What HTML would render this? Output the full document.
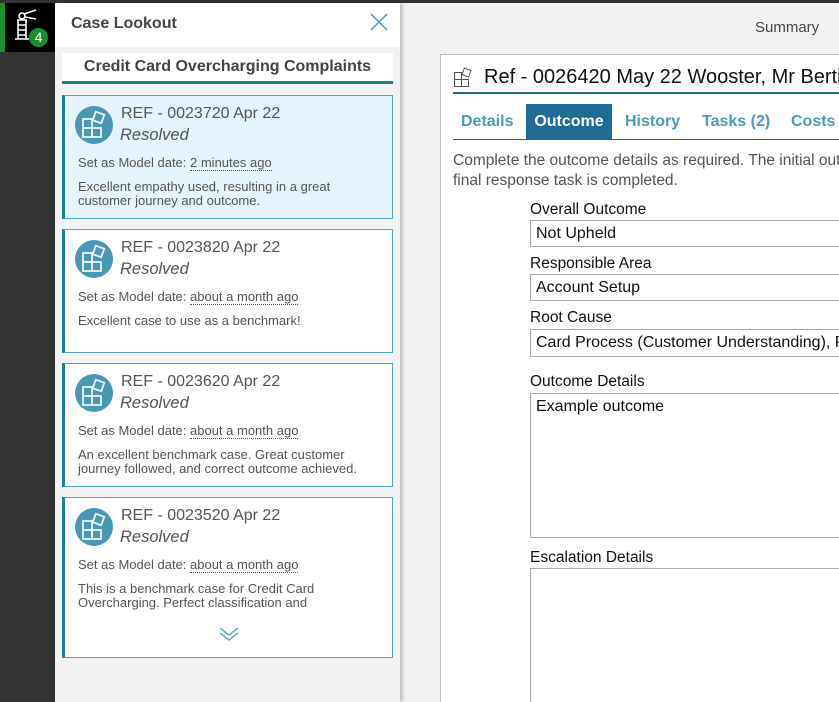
<!DOCTYPE html>
<html><head><style>
*{box-sizing:border-box;margin:0;padding:0}
html,body{width:839px;height:702px;overflow:hidden}
body{background:#f2f2f2;font-family:"Liberation Sans",Arial,sans-serif;position:relative}
.abs{position:absolute}
.card{position:absolute;left:62px;width:331px;background:#fff;border:1px solid #4aa3d0;border-left:3px solid #1e7f8e}
.ic{position:absolute;left:10px;top:10px;width:38px;height:38px}
.ref{position:absolute;left:56px;top:9px;font-size:16px;color:#555}
.res{position:absolute;left:55px;top:30px;font-size:16.5px;font-style:italic;color:#555}
.dt{position:absolute;left:13px;top:59px;font-size:13px;color:#555}
.dt u{text-decoration:none;border-bottom:1px dotted #555}
.ds{position:absolute;left:13px;top:84px;font-size:13px;color:#555;line-height:14px;width:285px}
.lbl{position:absolute;left:530px;font-size:15.5px;color:#111}
.inp{position:absolute;left:530px;width:320px;border:1px solid #aaa;background:#fff;font-size:16px;color:#111;padding:4px 5px 3px;white-space:nowrap;overflow:hidden}
.tab{position:absolute;top:104px;height:36px;font-size:16px;font-weight:bold;color:#4d9ac2;line-height:36px}
</style></head><body>
<div class="abs" style="left:0;top:0;width:839px;height:3px;background:#333"></div>
<div class="abs" style="left:0;top:3px;width:55px;height:699px;background:#333"></div>
<div class="abs" style="left:0;top:3px;width:55px;height:49px;background:#000"></div>
<div class="abs" style="left:0;top:3px;width:5px;height:49px;background:#1a8f2a"></div>
<svg class="abs" style="left:12px;top:8px" width="36" height="36" viewBox="0 0 36 36"><g stroke="#fff" fill="none" stroke-width="1.6"><path d="M5 12h10M6 12v19M14 12v19M3 31h14M6 17h8M6 22h8M6 27h8"/><circle cx="10" cy="8" r="3"/><path d="M12 6l12-4M13 9l11 2"/></g></svg>
<div class="abs" style="left:29px;top:28px;width:19px;height:19px;border-radius:50%;background:#1a8f2a;color:#fff;font-size:14px;text-align:center;line-height:19px">4</div>

<div class="abs" style="left:55px;top:3px;width:345px;height:699px;background:#f2f2f2;box-shadow:2px 0 4px rgba(0,0,0,.25)"></div>
<div class="abs" style="left:55px;top:3px;width:345px;height:44px;background:#fff"></div>
<div class="abs" style="left:71px;top:15px;font-size:16px;font-weight:bold;color:#444">Case Lookout</div>
<svg class="abs" style="left:370px;top:13px" width="18" height="18"><path d="M1 1L17 17M17 1L1 17" stroke="#4a96c8" stroke-width="1.5"/></svg>
<div class="abs" style="left:62px;top:53px;width:331px;height:31px;background:#fff;border-bottom:3px solid #1e7f8e;text-align:center;font-size:16px;font-weight:bold;color:#444;line-height:28px">Credit Card Overcharging Complaints</div>

<svg width="0" height="0" style="position:absolute"><defs><g id="ci"><circle cx="19" cy="19" r="19" fill="#4a96b8"/><g stroke="#e8f4fa" fill="none" stroke-width="1.8"><rect x="8" y="13" width="9" height="9"/><rect x="8" y="22" width="9" height="9"/><rect x="17" y="22" width="9" height="9"/><rect x="19" y="7" width="9" height="9" transform="rotate(20 23.5 11.5)"/></g></g></defs></svg>

<div class="card" style="top:95px;height:124px;background:#e5f4fc"><svg class="ic"><use href="#ci"/></svg><div class="ref">REF - 0023720 Apr 22</div><div class="res">Resolved</div><div class="dt">Set as Model date: <u>2 minutes ago</u></div><div class="ds">Excellent empathy used, resulting in a great customer journey and outcome.</div></div>
<div class="card" style="top:229px;height:124px"><svg class="ic"><use href="#ci"/></svg><div class="ref">REF - 0023820 Apr 22</div><div class="res">Resolved</div><div class="dt">Set as Model date: <u>about a month ago</u></div><div class="ds">Excellent case to use as a benchmark!</div></div>
<div class="card" style="top:363px;height:124px"><svg class="ic"><use href="#ci"/></svg><div class="ref">REF - 0023620 Apr 22</div><div class="res">Resolved</div><div class="dt">Set as Model date: <u>about a month ago</u></div><div class="ds">An excellent benchmark case. Great customer journey followed, and correct outcome achieved.</div></div>
<div class="card" style="top:497px;height:161px"><svg class="ic"><use href="#ci"/></svg><div class="ref">REF - 0023520 Apr 22</div><div class="res">Resolved</div><div class="dt">Set as Model date: <u>about a month ago</u></div><div class="ds" style="height:28px;overflow:hidden">This is a benchmark case for Credit Card Overcharging. Perfect classification and outcome.</div>
<svg class="abs" style="left:153px;top:128px" width="22" height="16"><path d="M2 2l9 7 9-7M2 7l9 7 9-7" stroke="#4aa3b8" fill="none" stroke-width="1.3"/></svg></div>

<div class="abs" style="left:755px;top:19px;font-size:15px;color:#444">Summary</div>
<div class="abs" style="left:440px;top:54px;width:420px;height:660px;background:#fff;border:1px solid #bbb"></div>
<svg class="abs" style="left:453px;top:66px" width="22" height="22"><g stroke="#555" fill="none" stroke-width="1"><rect x="1.5" y="6.5" width="7" height="7"/><rect x="1.5" y="13.5" width="7" height="7"/><rect x="8.5" y="13.5" width="7" height="7"/><rect x="10" y="3" width="7" height="7" transform="rotate(20 13.5 6.5)"/></g></svg>
<div class="abs" style="left:484px;top:66px;font-size:20px;color:#111;white-space:nowrap">Ref - 0026420 May 22 Wooster, Mr Bertie</div>
<div class="abs" style="left:453px;top:92px;width:400px;height:2px;background:#1e6a96"></div>
<div class="abs" style="left:453px;top:139px;width:400px;height:1px;background:#1e6a96"></div>
<div class="tab" style="left:461px">Details</div>
<div class="tab" style="left:526px;width:86px;background:#1f6b96;color:#fff;text-align:center">Outcome</div>
<div class="tab" style="left:625px">History</div>
<div class="tab" style="left:702px">Tasks (2)</div>
<div class="tab" style="left:791px">Costs</div>
<div class="abs" style="left:453px;top:151px;font-size:15.5px;color:#555;line-height:20px;white-space:nowrap">Complete the outcome details as required. The initial outcome<br>final response task is completed.</div>
<div class="lbl" style="top:201px">Overall Outcome</div><div class="inp" style="top:220px;height:27px">Not Upheld</div>
<div class="lbl" style="top:255px">Responsible Area</div><div class="inp" style="top:274px;height:27px">Account Setup</div>
<div class="lbl" style="top:309px">Root Cause</div><div class="inp" style="top:329px;height:28px">Card Process (Customer Understanding), Product</div>
<div class="lbl" style="top:373px">Outcome Details</div><div class="inp" style="top:393px;height:145px">Example outcome</div>
<div class="lbl" style="top:549px">Escalation Details</div><div class="inp" style="top:568px;height:140px"></div>
</body></html>
